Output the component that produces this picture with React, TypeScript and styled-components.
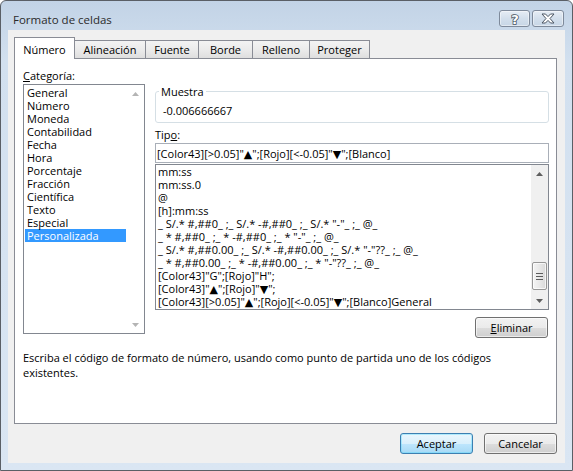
import styled, { createGlobalStyle } from 'styled-components';

const GlobalStyle = createGlobalStyle`
  html, body {
    margin:0;
    padding:0;
    background:#fff;
  }
  body {
    font-family:"Open Sans", "DejaVu Sans", sans-serif;
    font-size:11px;
    color:#000;
  }
  * {
    box-sizing:border-box;
  }
`

const tabs = [
  { label: 'Número', w: 61 },
  { label: 'Alineación', w: 72 },
  { label: 'Fuente', w: 54 },
  { label: 'Borde', w: 55 },
  { label: 'Relleno', w: 58 },
  { label: 'Proteger', w: 61 },
]

const categories = [
  'General', 'Número', 'Moneda', 'Contabilidad', 'Fecha', 'Hora',
  'Porcentaje', 'Fracción', 'Científica', 'Texto', 'Especial', 'Personalizada',
]

const formats = [
  'mm:ss',
  'mm:ss.0',
  '@',
  '[h]:mm:ss',
  '_ S/.* #,##0_ ;_ S/.* -#,##0_ ;_ S/.* "-"_ ;_ @_',
  '_ * #,##0_ ;_ * -#,##0_ ;_ * "-"_ ;_ @_',
  '_ S/.* #,##0.00_ ;_ S/.* -#,##0.00_ ;_ S/.* "-"??_ ;_ @_',
  '_ * #,##0.00_ ;_ * -#,##0.00_ ;_ * "-"??_ ;_ @_',
  '[Color43]"G";[Rojo]"H";',
  '[Color43]"▲";[Rojo]"▼";',
  '[Color43][>0.05]"▲";[Rojo][<-0.05]"▼";[Blanco]General',
]

const Arrow = ({ dir, off }: { dir: 'up' | 'down'; off?: boolean }) => (
  <svg width="7" height="4" viewBox="0 0 7 4">
    <polygon
      points={dir === 'up' ? '0,4 3.5,0 7,4' : '0,0 7,0 3.5,4'}
      fill={off ? '#b4b4b4' : '#5f5f5f'}
    />
  </svg>
)

const App = () => {
  return (
    <>
      <GlobalStyle />
      <Window>
        <TitleBar>
          <Title>Formato de celdas</Title>
          <CaptionButtons>
            <CaptionButton $w={31}>
              <svg width="12" height="14" viewBox="0 0 12 14">
                <text
                  x="6" y="12" textAnchor="middle"
                  fontFamily="DejaVu Sans, sans-serif" fontWeight="bold" fontSize="13"
                  fill="#fff" stroke="#4b5563" strokeWidth="1.6" paintOrder="stroke"
                >?</text>
              </svg>
            </CaptionButton>
            <CaptionButton $w={32}>
              <svg width="14" height="11" viewBox="0 0 14 11">
                <polygon
                  points="1,1 4.5,1 7,3.6 9.5,1 13,1 9,5.5 13,10 9.5,10 7,7.4 4.5,10 1,10 5,5.5"
                  fill="#fff" stroke="#4b5563" strokeWidth="1" strokeLinejoin="round"
                />
              </svg>
            </CaptionButton>
          </CaptionButtons>
        </TitleBar>

        <Client>
          <TabStrip>
            {tabs.map((t, i) => (
              <Tab key={t.label} $w={t.w} $active={i === 0}>{t.label}</Tab>
            ))}
          </TabStrip>

          <Panel>
            <TopRow>
              <LeftColumn>
                <FieldLabel><u>C</u>ategoría:</FieldLabel>
                <CategoryBox>
                  <CategoryItems>
                    {categories.map((c, i) => (
                      <CategoryItem key={c} $selected={i === categories.length - 1}>{c}</CategoryItem>
                    ))}
                  </CategoryItems>
                  <ScrollBar $off>
                    <ArrowBox><Arrow dir="up" off /></ArrowBox>
                    <Track />
                    <ArrowBox><Arrow dir="down" off /></ArrowBox>
                  </ScrollBar>
                </CategoryBox>
              </LeftColumn>

              <RightColumn>
                <GroupBox>
                  <Legend>Muestra</Legend>
                  <SampleValue>-0.006666667</SampleValue>
                </GroupBox>

                <TipoLabel>Tip<u>o</u>:</TipoLabel>
                <TypeInput readOnly value={'[Color43][>0.05]"▲";[Rojo][<-0.05]"▼";[Blanco]'} />

                <FormatBox>
                  <FormatItems>
                    {formats.map(f => (
                      <FormatItem key={f}>{f}</FormatItem>
                    ))}
                  </FormatItems>
                  <ScrollBar>
                    <ArrowBox><Arrow dir="up" /></ArrowBox>
                    <Track>
                      <Thumb>
                        <svg width="7" height="7" viewBox="0 0 7 7">
                          <rect x="0" y="0" width="7" height="1" fill="#5c5c5c" />
                          <rect x="0" y="3" width="7" height="1" fill="#5c5c5c" />
                          <rect x="0" y="6" width="7" height="1" fill="#5c5c5c" />
                        </svg>
                      </Thumb>
                    </Track>
                    <ArrowBox><Arrow dir="down" /></ArrowBox>
                  </ScrollBar>
                </FormatBox>

                <DeleteRow>
                  <Button><u>E</u>liminar</Button>
                </DeleteRow>
              </RightColumn>
            </TopRow>

            <Description>
              Escriba el código de formato de número, usando como punto de partida uno de los códigos existentes.
            </Description>
          </Panel>

          <ButtonRow>
            <Button $default>Aceptar</Button>
            <Button>Cancelar</Button>
          </ButtonRow>
        </Client>
      </Window>
    </>
  )
}

export default App

const Window = styled.div`
  width:573px;
  height:471px;
  display:flex;
  flex-direction:column;
  border:1px solid #5a5f66;
  border-radius:6px 6px 0 0;
  background:linear-gradient(#c2d3e6, #d2e0ef 60px, #dae6f3);
  overflow:hidden;
`

const TitleBar = styled.div`
  height:29px;
  flex-shrink:0;
  display:flex;
  align-items:flex-start;
  justify-content:space-between;
  padding:9px 8px 0 12px;
`

const Title = styled.div`
  margin-top:2px;
  font-size:11.5px;
  line-height:15px;
  color:#2b2b2b;
`

const CaptionButtons = styled.div`
  display:flex;
  gap:2px;
`

const CaptionButton = styled.div<{ $w: number }>`
  width:${p => p.$w}px;
  height:17px;
  display:flex;
  align-items:center;
  justify-content:center;
  border:1px solid #7e8a9b;
  border-radius:3px;
  background:linear-gradient(#e6edf5, #d3dfec 50%, #c7d6e6);
  box-shadow:inset 0 0 0 1px rgba(255,255,255,0.45);
`

const Client = styled.div`
  flex:1;
  margin:0 7px 7px 7px;
  padding:7px 8px 9px 6px;
  display:flex;
  flex-direction:column;
  background:#f0f0f0;
`

const TabStrip = styled.div`
  height:21px;
  display:flex;
  align-items:flex-end;
`

const Tab = styled.div<{ $w: number; $active?: boolean }>`
  position:relative;
  width:${p => p.$w}px;
  height:${p => p.$active ? 22 : 18}px;
  margin-left:-1px;
  margin-bottom:${p => p.$active ? -1 : 0}px;
  padding-top:${p => p.$active ? 1 : 0}px;
  display:flex;
  align-items:center;
  justify-content:center;
  line-height:15px;
  border:1px solid #898c95;
  border-bottom:none;
  background:${p => p.$active ? '#fff' : 'linear-gradient(#f3f3f3, #ebebeb 50%, #dedede)'};
  z-index:${p => p.$active ? 1 : 0};

  &:first-child {
    margin-left:0;
  }
`

const Panel = styled.div`
  height:366px;
  flex-shrink:0;
  padding:9px 7px 0 8px;
  border:1px solid #898c95;
  background:#fff;
`

const TopRow = styled.div`
  display:flex;
  gap:10px;
`

const LeftColumn = styled.div`
  width:122px;
  display:flex;
  flex-direction:column;
`

const FieldLabel = styled.div`
  line-height:15px;
  margin-bottom:1px;
`

const CategoryBox = styled.div`
  height:250px;
  display:flex;
  border:1px solid #828790;
`

const CategoryItems = styled.div`
  flex:1;
  padding:1px;
`

const CategoryItem = styled.div<{ $selected?: boolean }>`
  line-height:13px;
  padding-left:2px;
  white-space:nowrap;
  background:${p => p.$selected ? '#3399ff' : 'transparent'};
  color:${p => p.$selected ? '#fff' : '#000'};
`

const ScrollBar = styled.div<{ $off?: boolean }>`
  width:17px;
  display:flex;
  flex-direction:column;
  background:${p => p.$off ? '#fff' : '#f0f0f0'};
`

const ArrowBox = styled.div`
  height:17px;
  display:flex;
  align-items:center;
  justify-content:center;
`

const Track = styled.div`
  flex:1;
  display:flex;
  flex-direction:column;
  justify-content:flex-end;
  padding:0 1px 2px 1px;
`

const Thumb = styled.div`
  height:28px;
  display:flex;
  align-items:center;
  justify-content:center;
  border:1px solid #979797;
  border-radius:2px;
  background:linear-gradient(to right, #f4f4f4, #e8e8e8 50%, #d9d9d9);
  box-shadow:inset 0 0 0 1px rgba(255,255,255,0.7);
`

const RightColumn = styled.div`
  width:394px;
  padding-top:16px;
  display:flex;
  flex-direction:column;
`

const GroupBox = styled.div`
  position:relative;
  height:32px;
  margin-top:7px;
  border:1px solid #d5dfe5;
  border-radius:3px;
`

const Legend = styled.span`
  position:absolute;
  top:-8px;
  left:3px;
  padding:0 2px;
  line-height:15px;
  background:#fff;
`

const SampleValue = styled.div`
  padding:11px 0 0 7px;
  line-height:15px;
`

const TypeInput = styled.input`
  width:100%;
  height:20px;
  margin:1px 0 0 0;
  padding:0 1px;
  border:1px solid #a9afb8;
  font-family:"Open Sans", "DejaVu Sans", sans-serif;
  font-size:11px;
  color:#000;
  background:#fff;
  outline:none;
`

const TipoLabel = styled.div`
  margin-top:4px;
  line-height:15px;
`

const FormatBox = styled.div`
  height:146px;
  margin-top:1px;
  display:flex;
  border:1px solid #828790;
`

const FormatItems = styled.div`
  flex:1;
  padding-left:2px;
  overflow:hidden;
`

const FormatItem = styled.div`
  line-height:13px;
  white-space:nowrap;
`

const DeleteRow = styled.div`
  margin-top:7px;
  display:flex;
  justify-content:flex-end;
  padding-right:1px;
`

const Button = styled.div<{ $default?: boolean }>`
  width:73px;
  height:21px;
  display:flex;
  align-items:center;
  justify-content:center;
  line-height:15px;
  border:1px solid ${p => p.$default ? '#3c7fb1' : '#707070'};
  border-radius:3px;
  background:${p => p.$default
    ? 'linear-gradient(#eaf6fd, #d9f0fc 50%, #bee6fd 51%, #a7d9f5)'
    : 'linear-gradient(#f2f2f2, #ebebeb 50%, #dddddd 51%, #cfcfcf)'};
  box-shadow:inset 0 0 0 1px ${p => p.$default ? 'rgba(72,216,251,0.35)' : 'rgba(255,255,255,0.6)'};
`

const Description = styled.div`
  margin-top:12px;
  max-width:500px;
  line-height:15px;
`

const ButtonRow = styled.div`
  margin-top:9px;
  display:flex;
  justify-content:flex-end;
  gap:11px;
`
